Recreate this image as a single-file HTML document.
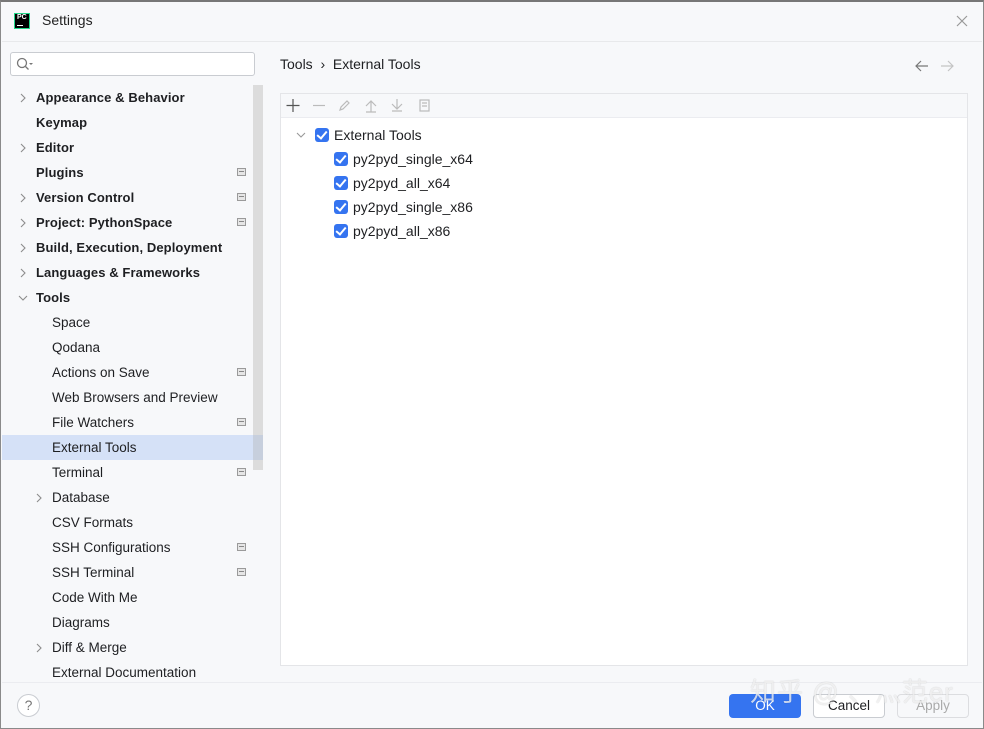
<!DOCTYPE html>
<html><head><meta charset="utf-8"><style>
*{margin:0;padding:0;box-sizing:border-box}
body{width:984px;height:729px;background:#f7f8fa;font-family:"Liberation Sans","Noto Sans CJK SC",sans-serif;color:#1e1f22;position:relative;overflow:hidden;font-size:13.5px}
.abs{position:absolute}
.frame{position:absolute;left:0;top:0;width:984px;height:729px;border:1px solid #8a8a8a;border-top:2px solid #777}
.row{position:absolute;left:0;width:263px;height:25px;line-height:25px}
.b{position:absolute;left:36px;font-weight:bold;font-size:13px;letter-spacing:0.1px}
.n{position:absolute;left:52px}
.chev{position:absolute;top:8px;width:6px;height:10px}
.ic{position:absolute;left:237px;top:8px;width:9px;height:8px;border:1px solid #9a9a9a;background:#e6e6e6}
.ic:after{content:"";position:absolute;left:1px;top:2px;width:5px;height:1px;background:#888}
.cb{position:absolute;width:14px;height:14px;background:#3574f0;border-radius:3px}
.cb:after{content:"";position:absolute;left:4px;top:1px;width:4px;height:8px;border:solid #fff;border-width:0 2px 2px 0;transform:rotate(40deg)}
.t{position:absolute;font-size:14px}
</style></head><body>
<svg width="0" height="0" style="position:absolute"><defs><path id="cr" d="M1 1l4 4-4 4" fill="none" stroke="#8c8c8c" stroke-width="1.1"/></defs></svg>
<div class="frame"></div>
<div class="abs" style="left:14px;top:13px;width:16px;height:16px;background:#000;border:1px solid #21d789;color:#fff;font-size:7px;font-weight:bold;line-height:8px;padding-left:2px">PC<div style="width:6px;height:1px;background:#fff;margin-top:3px"></div></div>
<div class="abs" style="left:42px;top:12px;font-size:14px;color:#222">Settings</div>
<svg class="abs" style="left:956px;top:15px" width="12" height="12"><path d="M1 1l10 10M11 1L1 11" stroke="#999" stroke-width="1.2"/></svg>
<div class="abs" style="left:2px;top:41px;width:980px;height:1px;background:#e8e9eb"></div>
<div class="abs" style="left:10px;top:52px;width:245px;height:24px;background:#fff;border:1px solid #c9ccd1;border-radius:3px"></div>
<svg class="abs" style="left:16px;top:57px" width="20" height="14"><circle cx="6" cy="6" r="4.5" fill="none" stroke="#777" stroke-width="1.3"/><line x1="9.5" y1="9.5" x2="12.5" y2="12.5" stroke="#777" stroke-width="1.3"/><path d="M13 6l2 2 2-2z" fill="#777"/></svg>
<div class="abs" style="left:253px;top:85px;width:10px;height:385px;background:#dcdcdc"></div>
<div class="abs" style="left:2px;top:435px;width:251px;height:25px;background:#d5e1f7"></div>
<div class="abs" style="left:253px;top:435px;width:10px;height:25px;background:#c7cfdd"></div>
<div style="position:absolute;left:0;top:85px">
<div class="row" style="top:0"><svg class="chev" style="left:20px"><use href="#cr"/></svg><span class="b">Appearance &amp; Behavior</span></div>
<div class="row" style="top:25px"><span class="b">Keymap</span></div>
<div class="row" style="top:50px"><svg class="chev" style="left:20px"><use href="#cr"/></svg><span class="b">Editor</span></div>
<div class="row" style="top:75px"><span class="b">Plugins</span><i class="ic"></i></div>
<div class="row" style="top:100px"><svg class="chev" style="left:20px"><use href="#cr"/></svg><span class="b">Version Control</span><i class="ic"></i></div>
<div class="row" style="top:125px"><svg class="chev" style="left:20px"><use href="#cr"/></svg><span class="b">Project: PythonSpace</span><i class="ic"></i></div>
<div class="row" style="top:150px"><svg class="chev" style="left:20px"><use href="#cr"/></svg><span class="b">Build, Execution, Deployment</span></div>
<div class="row" style="top:175px"><svg class="chev" style="left:20px"><use href="#cr"/></svg><span class="b">Languages &amp; Frameworks</span></div>
<div class="row" style="top:200px"><svg class="abs" style="left:18px;top:10px" width="10" height="6"><path d="M1 1l4 4 4-4" fill="none" stroke="#8c8c8c" stroke-width="1.1"/></svg><span class="b">Tools</span></div>
<div class="row" style="top:225px"><span class="n">Space</span></div>
<div class="row" style="top:250px"><span class="n">Qodana</span></div>
<div class="row" style="top:275px"><span class="n">Actions on Save</span><i class="ic"></i></div>
<div class="row" style="top:300px"><span class="n">Web Browsers and Preview</span></div>
<div class="row" style="top:325px"><span class="n">File Watchers</span><i class="ic"></i></div>
<div class="row" style="top:350px"><span class="n">External Tools</span></div>
<div class="row" style="top:375px"><span class="n">Terminal</span><i class="ic"></i></div>
<div class="row" style="top:400px"><svg class="chev" style="left:36px"><use href="#cr"/></svg><span class="n">Database</span></div>
<div class="row" style="top:425px"><span class="n">CSV Formats</span></div>
<div class="row" style="top:450px"><span class="n">SSH Configurations</span><i class="ic"></i></div>
<div class="row" style="top:475px"><span class="n">SSH Terminal</span><i class="ic"></i></div>
<div class="row" style="top:500px"><span class="n">Code With Me</span></div>
<div class="row" style="top:525px"><span class="n">Diagrams</span></div>
<div class="row" style="top:550px"><svg class="chev" style="left:36px"><use href="#cr"/></svg><span class="n">Diff &amp; Merge</span></div>
<div class="row" style="top:575px"><span class="n">External Documentation</span></div>
</div>
<div class="abs" style="left:280px;top:56px;font-size:14px">Tools &nbsp;›&nbsp; External Tools</div>
<svg class="abs" style="left:915px;top:60px" width="40" height="12" fill="none" stroke-width="1.2"><path d="M1 6h12M6 1L1 6l5 5" stroke="#777"/><path d="M26 6h12M33 1l5 5-5 5" stroke="#c4c4c4"/></svg>
<div class="abs" style="left:280px;top:93px;width:688px;height:573px;background:#fff;border:1px solid #e4e5e8"></div>
<div class="abs" style="left:281px;top:94px;width:686px;height:24px;background:#f7f8fa;border-bottom:1px solid #ebecf0"></div>
<svg class="abs" style="left:285px;top:97px" width="150" height="18" fill="none" stroke-width="1.2">
<path d="M8 2v13M1.5 8.5h13" stroke="#555"/>
<path d="M28 8.5h12" stroke="#bbb"/>
<path d="M55 13l1-3 6-6 2 2-6 6z" stroke="#bbb"/>
<path d="M86 4v11M81 9l5-5 5 5M81 15h10" stroke="#bbb"/>
<path d="M112 2v10M107 7l5 5 5-5M107 14h10" stroke="#bbb"/>
<rect x="135" y="3" width="9" height="11" stroke="#bbb"/><path d="M137 6h5M137 9h5" stroke="#bbb"/>
</svg>
<svg class="abs" style="left:296px;top:132px" width="10" height="6"><path d="M1 1l4 4 4-4" fill="none" stroke="#999" stroke-width="1.1"/></svg>
<div class="cb" style="left:315px;top:128px"></div><div class="t" style="left:334px;top:127px">External Tools</div>
<div class="cb" style="left:334px;top:152px"></div><div class="t" style="left:353px;top:151px">py2pyd_single_x64</div>
<div class="cb" style="left:334px;top:176px"></div><div class="t" style="left:353px;top:175px">py2pyd_all_x64</div>
<div class="cb" style="left:334px;top:200px"></div><div class="t" style="left:353px;top:199px">py2pyd_single_x86</div>
<div class="cb" style="left:334px;top:224px"></div><div class="t" style="left:353px;top:223px">py2pyd_all_x86</div>
<div class="abs" style="left:2px;top:682px;width:980px;height:1px;background:#ebecf0"></div>
<div class="abs" style="left:17px;top:694px;width:23px;height:23px;border:1px solid #c9ccd1;border-radius:50%;background:#fff;text-align:center;line-height:21px;color:#777;font-size:14px">?</div>
<div class="abs" style="left:729px;top:694px;width:72px;height:24px;background:#3574f0;border-radius:4px;color:#fff;text-align:center;line-height:24px">OK</div>
<div class="abs" style="left:813px;top:694px;width:72px;height:24px;background:#fff;border:1px solid #c9ccd1;border-radius:4px;text-align:center;line-height:22px">Cancel</div>
<div class="abs" style="left:897px;top:694px;width:72px;height:24px;border:1px solid #dcdde0;border-radius:4px;text-align:center;line-height:22px;color:#aaa">Apply</div>
<div class="abs" style="left:750px;top:672px;font-size:26px;color:rgba(255,255,255,0.75);text-shadow:0 0 1px rgba(0,0,0,0.25);letter-spacing:1px">知乎 @ 、灬范er</div>
</body></html>
